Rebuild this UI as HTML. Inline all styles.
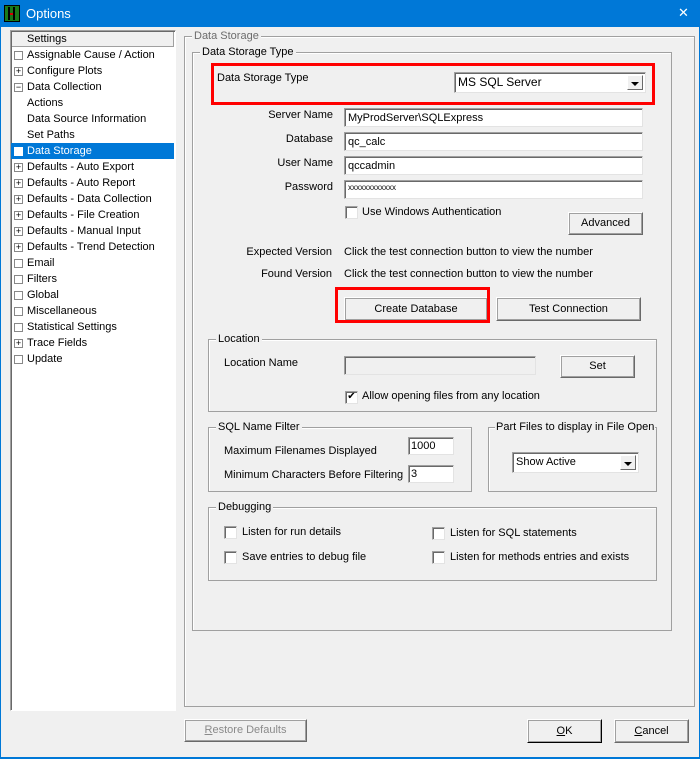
<!DOCTYPE html>
<html><head><style>
*{margin:0;padding:0;box-sizing:border-box}
body{width:700px;height:759px;background:#f0f0f0;font-family:"Liberation Sans",sans-serif;font-size:11px;color:#000;position:relative;overflow:hidden}
.a{position:absolute;white-space:nowrap}
.title{left:0;top:0;width:700px;height:27px;background:#0078d7;color:#fff;font-size:13px}
.grp{position:absolute;border:1px solid #a0a0a0;box-shadow:1px 1px 0 #fff inset}
.lg{position:absolute;top:-8px;left:7px;background:#f0f0f0;padding:0 2px;line-height:14px;white-space:nowrap}
.tb{position:absolute;background:#fff;border:1px solid #a0a0a0;border-right-color:#e3e3e3;border-bottom-color:#e3e3e3;box-shadow:inset 1px 1px 0 #696969;padding-left:3px;line-height:18px;white-space:nowrap}
.btn{position:absolute;background:#f0f0f0;border:1px solid #fff;border-right-color:#696969;border-bottom-color:#696969;box-shadow:1px 1px 0 #a0a0a0 inset,-1px -1px 0 #a0a0a0 inset;text-align:center}
.cb{position:absolute;width:13px;height:13px;background:#fff;border:1px solid #a0a0a0;border-right-color:#e3e3e3;border-bottom-color:#e3e3e3;box-shadow:inset 1px 1px 0 #696969}
.dd{position:absolute;right:2px;top:2px;width:16px;bottom:2px;background:#f0f0f0;border:1px solid #fff;border-right-color:#696969;border-bottom-color:#696969}
.dd:after{content:"";position:absolute;left:3px;top:6px;width:0;height:0;border-left:4px solid transparent;border-right:4px solid transparent;border-top:4px solid #000}
.tree div{position:absolute;left:0;width:163px;height:16px;line-height:16px;padding-left:16px}
.bx{position:absolute;left:3px;top:4px;width:9px;height:9px;border:1px solid #888;background:#fff;font-size:9px;line-height:7px;text-align:center;color:#000}
.r{text-align:right}
.red{position:absolute;border:3px solid #f00}
</style></head><body>
<div class="a title"><div style="position:absolute;left:4px;top:5px;width:16px;height:17px;background:#1a7a1a;border:1px solid #000"><div style="position:absolute;left:3px;top:1px;width:2px;height:13px;background:#000"></div><div style="position:absolute;left:8px;top:1px;width:2px;height:13px;background:#000"></div><div style="position:absolute;left:5px;top:7px;width:3px;height:2px;background:#d00"></div></div><span style="position:absolute;left:26px;top:6px">Options</span><span style="position:absolute;left:678px;top:5px;font-size:13px">✕</span></div>
<div class="a" style="left:0;top:27px;width:1px;height:732px;background:#0078d7"></div>
<div class="a" style="left:699px;top:27px;width:1px;height:732px;background:#0078d7"></div>
<div class="a" style="left:0;top:757px;width:700px;height:2px;background:#0078d7"></div>

<div class="a" style="left:10px;top:30px;width:166px;height:681px;background:#fff;border:1px solid #a0a0a0;border-right-color:#fff;border-bottom-color:#fff;box-shadow:inset 1px 1px 0 #696969"></div>
<div class="a" style="left:12px;top:32px;width:162px;height:15px;background:#f0f0f0;border-bottom:1px solid #a0a0a0;border-right:1px solid #a0a0a0;padding-left:15px;line-height:14px">Settings</div>
<div class="tree a" style="left:11px;top:47px">
<div style="top:0"><span class="bx"></span>Assignable Cause / Action</div>
<div style="top:16px"><span class="bx">+</span>Configure Plots</div>
<div style="top:32px"><span class="bx">−</span>Data Collection</div>
<div style="top:48px">Actions</div>
<div style="top:64px">Data Source Information</div>
<div style="top:80px">Set Paths</div>
<div style="top:96px;background:#0078d7;color:#fff"><span class="bx" style="border-color:#fff"></span>Data Storage</div>
<div style="top:112px"><span class="bx">+</span>Defaults - Auto Export</div>
<div style="top:128px"><span class="bx">+</span>Defaults - Auto Report</div>
<div style="top:144px"><span class="bx">+</span>Defaults - Data Collection</div>
<div style="top:160px"><span class="bx">+</span>Defaults - File Creation</div>
<div style="top:176px"><span class="bx">+</span>Defaults - Manual Input</div>
<div style="top:192px"><span class="bx">+</span>Defaults - Trend Detection</div>
<div style="top:208px"><span class="bx"></span>Email</div>
<div style="top:224px"><span class="bx"></span>Filters</div>
<div style="top:240px"><span class="bx"></span>Global</div>
<div style="top:256px"><span class="bx"></span>Miscellaneous</div>
<div style="top:272px"><span class="bx"></span>Statistical Settings</div>
<div style="top:288px"><span class="bx">+</span>Trace Fields</div>
<div style="top:304px"><span class="bx"></span>Update</div>
</div>

<div class="grp" style="left:184px;top:36px;width:511px;height:671px"><span class="lg" style="color:#6d6d6d">Data Storage</span></div>
<div class="grp" style="left:192px;top:52px;width:480px;height:579px"><span class="lg">Data Storage Type</span></div>

<div class="red" style="left:211px;top:63px;width:444px;height:42px"></div>
<div class="a" style="left:217px;top:72px">Data Storage Type</div>
<div class="tb" style="left:454px;top:72px;width:192px;height:21px;line-height:19px;font-size:12px">MS SQL Server<div class="dd"></div></div>

<div class="a r" style="left:230px;width:103px;top:109px">Server Name</div>
<div class="a r" style="left:230px;width:103px;top:133px">Database</div>
<div class="a r" style="left:230px;width:103px;top:157px">User Name</div>
<div class="a r" style="left:230px;width:103px;top:181px">Password</div>
<div class="tb" style="left:344px;top:108px;width:299px;height:19px">MyProdServer\SQLExpress</div>
<div class="tb" style="left:344px;top:132px;width:299px;height:19px">qc_calc</div>
<div class="tb" style="left:344px;top:156px;width:299px;height:19px">qccadmin</div>
<div class="tb" style="left:344px;top:180px;width:299px;height:19px;font-size:8px;line-height:13px">xxxxxxxxxxxx</div>
<div class="cb" style="left:345px;top:206px"></div>
<div class="a" style="left:362px;top:206px">Use Windows Authentication</div>
<div class="btn" style="left:568px;top:212px;width:75px;height:23px;line-height:21px">Advanced</div>
<div class="a r" style="left:200px;width:132px;top:246px">Expected Version</div>
<div class="a" style="left:344px;top:246px">Click the test connection button to view the number</div>
<div class="a r" style="left:200px;width:132px;top:268px">Found Version</div>
<div class="a" style="left:344px;top:268px">Click the test connection button to view the number</div>
<div class="btn" style="left:344px;top:297px;width:144px;height:24px;line-height:22px">Create Database</div>
<div class="red" style="left:335px;top:287px;width:155px;height:36px"></div>
<div class="btn" style="left:496px;top:297px;width:145px;height:24px;line-height:22px">Test Connection</div>

<div class="grp" style="left:208px;top:339px;width:449px;height:73px"><span class="lg">Location</span></div>
<div class="a" style="left:224px;top:357px">Location Name</div>
<div class="tb" style="left:344px;top:356px;width:192px;height:19px;background:#f0f0f0"></div>
<div class="btn" style="left:560px;top:355px;width:75px;height:23px;line-height:21px">Set</div>
<div class="cb" style="left:345px;top:391px;font-size:10px;line-height:10px;text-align:center">✔</div>
<div class="a" style="left:362px;top:390px">Allow opening files from any location</div>

<div class="grp" style="left:208px;top:427px;width:264px;height:65px"><span class="lg">SQL Name Filter</span></div>
<div class="a" style="left:224px;top:445px">Maximum Filenames Displayed</div>
<div class="a" style="left:224px;top:469px">Minimum Characters Before Filtering</div>
<div class="tb" style="left:408px;top:437px;width:46px;height:18px;padding-left:2px;line-height:16px">1000</div>
<div class="tb" style="left:408px;top:465px;width:46px;height:18px;padding-left:2px;line-height:16px">3</div>
<div class="grp" style="left:488px;top:427px;width:169px;height:65px"><span class="lg" style="left:6px;padding:0 1px">Part Files to display in File Open</span></div>
<div class="tb" style="left:512px;top:452px;width:127px;height:21px;line-height:19px">Show Active<div class="dd"></div></div>

<div class="grp" style="left:208px;top:507px;width:449px;height:74px"><span class="lg">Debugging</span></div>
<div class="cb" style="left:224px;top:526px"></div><div class="a" style="left:242px;top:526px">Listen for run details</div>
<div class="cb" style="left:224px;top:551px"></div><div class="a" style="left:242px;top:551px">Save entries to debug file</div>
<div class="cb" style="left:432px;top:527px"></div><div class="a" style="left:450px;top:527px">Listen for SQL statements</div>
<div class="cb" style="left:432px;top:551px"></div><div class="a" style="left:450px;top:551px">Listen for methods entries and exists</div>

<div class="btn" style="left:184px;top:719px;width:123px;height:23px;line-height:21px;color:#8a8a8a"><u>R</u>estore Defaults</div>
<div class="btn" style="left:527px;top:719px;width:75px;height:24px;line-height:22px;border-right-color:#000;border-bottom-color:#000"><u>O</u>K</div>
<div class="btn" style="left:614px;top:719px;width:75px;height:24px;line-height:22px"><u>C</u>ancel</div>
</body></html>
